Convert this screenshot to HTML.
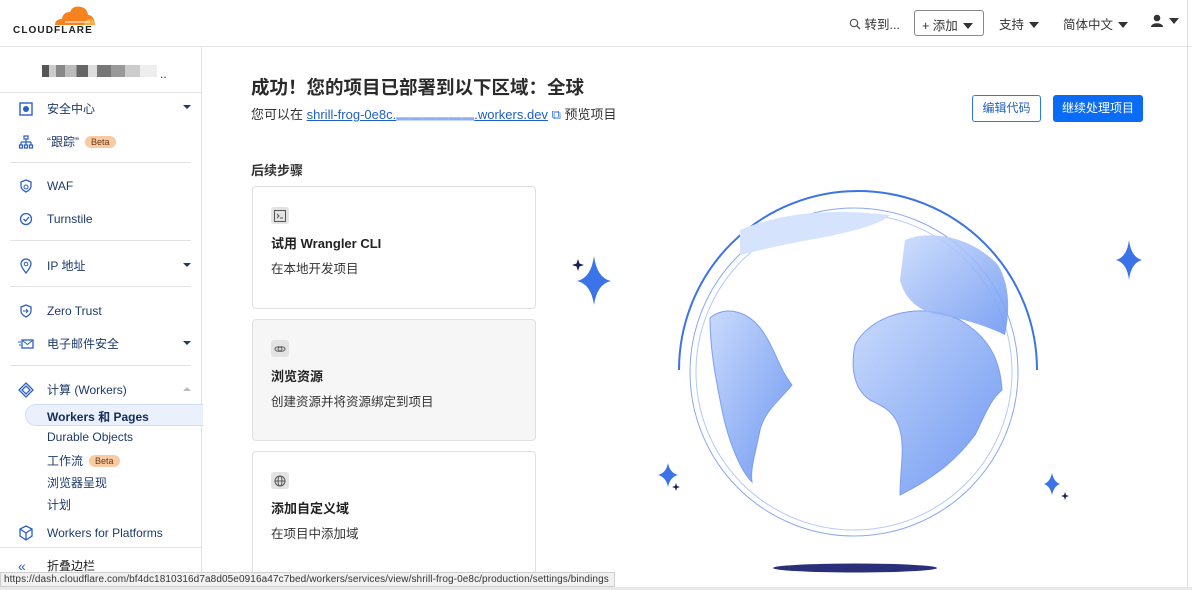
<!DOCTYPE html>
<html><head><meta charset="utf-8"><style>
*{box-sizing:border-box;margin:0;padding:0}
body{width:1192px;height:590px;overflow:hidden;background:#fff;font-family:"Liberation Sans","Noto Sans CJK SC",sans-serif;color:#313131;position:relative}
.hdr{position:absolute;left:0;top:0;width:1192px;height:47px;border-bottom:1px solid #e5e5e5}
.side{position:absolute;left:0;top:47px;width:202px;height:543px;border-right:1px solid #e2e2e2}
.it{position:absolute;left:18px;font-size:12px;color:#1e3a6a;display:flex;align-items:center}
.it svg{width:16px;height:16px;margin-right:13px}
.caret{position:absolute;left:183px;width:0;height:0;border-left:4px solid transparent;border-right:4px solid transparent;border-top:4px solid #1e3a6a}
.sep{position:absolute;left:10px;width:181px;height:1px;background:#e2e2e2}
.sub{position:absolute;left:47px;font-size:12px;color:#1e3a6a}
.beta{display:inline-block;background:#f8cba3;color:#6b3a12;font-size:9px;border-radius:8px;padding:1px 6px;margin-left:6px;vertical-align:1px}
.card{position:absolute;left:252px;width:284px;border:1px solid #e0e0e0;border-radius:4px;background:#fff}
.card .ic{position:absolute;left:18px;top:20px;width:18px;height:17px;background:#e3e3e3;border-radius:3px}
.card .ic svg{position:absolute;left:3px;top:2.5px}
.card b{position:absolute;left:18px;top:46px;font-size:13px;color:#222}
.card span{position:absolute;left:18px;top:71px;font-size:12.5px;color:#333}
.nav{position:absolute;top:14px;font-size:12.5px;color:#333}
.tri{display:inline-block;width:0;height:0;border-left:5px solid transparent;border-right:5px solid transparent;border-top:6px solid #333;margin-left:5px;vertical-align:1px}
</style></head><body>
<div class="hdr">
  <svg style="position:absolute;left:53px;top:5px" width="44" height="21" viewBox="0 0 44 21"><path d="M2 20 Q2 14 9 14 Q10 7 17 7 Q20 0 28 2 Q34 3 35 10 Q41 10 42 20 Z" fill="#f6821f"/><path d="M31 20 Q32 14 38 14 Q42 15 42 20Z" fill="#fbad41"/><path d="M12 17 L37 17" stroke="#fff" stroke-width="1"/></svg>
  <div style="position:absolute;left:13px;top:25px;font-size:10px;font-weight:bold;letter-spacing:1.1px;color:#222">CLOUDFLARE</div>
  <div class="nav" style="left:849px"><svg width="12" height="12" viewBox="0 0 12 12" style="vertical-align:-1px"><circle cx="5" cy="5" r="3.7" fill="none" stroke="#555" stroke-width="1.2"/><path d="M8 8 L11 11" stroke="#555" stroke-width="1.3"/></svg> 转到...</div>
  <div style="position:absolute;left:914px;top:10px;width:70px;height:26px;border:1px solid #888;border-radius:3px;font-size:12.5px;color:#333;padding:4px 0 0 7px">+ 添加<span class="tri"></span></div>
  <div class="nav" style="left:999px">支持<span class="tri"></span></div>
  <div class="nav" style="left:1063px">简体中文<span class="tri"></span></div>
  <div class="nav" style="left:1150px"><svg width="14" height="13" viewBox="0 0 14 13" style="vertical-align:-2px"><circle cx="7" cy="4" r="3.3" fill="#333"/><path d="M1 13 C1 8 13 8 13 13Z" fill="#333"/></svg><span class="tri"></span></div>
</div>
<div style="position:absolute;left:1187px;top:0;width:1px;height:590px;background:#ddd"></div>
<div class="side">
  <div style="position:absolute;left:42px;top:18px;width:115px;height:12px;background:linear-gradient(90deg,#555 0 6%,#ccc 6% 12%,#888 12% 20%,#bbb 20% 30%,#666 30% 40%,#ddd 40% 48%,#777 48% 60%,#999 60% 72%,#ccc 72% 85%,#eee 85%)"></div>
  <div style="position:absolute;left:160px;top:20px;font-size:12px">..</div>
  <div class="sep" style="left:0;width:202px;top:45px"></div>
  <div class="it" style="top:53px"><svg viewBox="0 0 16 16"><rect x="2" y="2" width="12" height="12" fill="none" stroke="#2c5fc4" stroke-width="1.4"/><circle cx="8" cy="8" r="3" fill="#2c5fc4"/></svg>安全中心</div><div class="caret" style="top:58px"></div>
  <div class="it" style="top:86px"><svg viewBox="0 0 16 16"><path d="M6 2h4v3H6zM8 5v3M3 8h10M3 8v3M8 8v3M13 8v3M1.5 11h3v3h-3zM6.5 11h3v3h-3zM11.5 11h3v3h-3z" fill="none" stroke="#2c5fc4" stroke-width="1.2"/></svg>“跟踪”<span class="beta">Beta</span></div>
  <div class="sep" style="top:115px"></div>
  <div class="it" style="top:131px"><svg viewBox="0 0 16 16"><path d="M8 2 L13 4 V8 C13 11 10 13 8 14 C6 13 3 11 3 8 V4 Z" fill="none" stroke="#2c5fc4" stroke-width="1.3"/><circle cx="8" cy="9" r="2" fill="none" stroke="#2c5fc4"/></svg>WAF</div>
  <div class="it" style="top:164px"><svg viewBox="0 0 16 16"><circle cx="8" cy="8" r="5.5" fill="none" stroke="#2c5fc4" stroke-width="1.3"/><path d="M5.5 8 L7.5 10 L11 6" fill="none" stroke="#2c5fc4" stroke-width="1.3"/></svg>Turnstile</div>
  <div class="sep" style="top:193px"></div>
  <div class="it" style="top:210px"><svg viewBox="0 0 16 16"><path d="M8 15 C4 10 3 8 3 6 A5 5 0 0 1 13 6 C13 8 12 10 8 15Z" fill="none" stroke="#2c5fc4" stroke-width="1.3"/><circle cx="8" cy="6" r="1.8" fill="none" stroke="#2c5fc4"/></svg>IP 地址</div><div class="caret" style="top:216px"></div>
  <div class="sep" style="top:239px"></div>
  <div class="it" style="top:256px"><svg viewBox="0 0 16 16"><path d="M8 2 L13 4 V8 C13 11 10 13 8 14 C6 13 3 11 3 8 V4 Z" fill="none" stroke="#2c5fc4" stroke-width="1.3"/><path d="M5 8h5M8 6l2 2-2 2" fill="none" stroke="#2c5fc4"/></svg>Zero Trust</div>
  <div class="it" style="top:288px"><svg viewBox="0 0 16 16"><rect x="4" y="4" width="11" height="8" fill="none" stroke="#2c5fc4" stroke-width="1.3"/><path d="M4 4l5.5 4.5L15 4M0 6h3M1 9h2" fill="none" stroke="#2c5fc4"/></svg>电子邮件安全</div><div class="caret" style="top:294px"></div>
  <div class="sep" style="top:318px"></div>
  <div class="it" style="top:334px"><svg viewBox="0 0 16 16"><path d="M8 1 L15 8 L8 15 L1 8Z M8 4 L12 8 L8 12 L4 8Z" fill="none" stroke="#2c5fc4" stroke-width="1.3"/></svg>计算 (Workers)</div><div class="caret" style="top:340px;border-top:none;border-bottom:4px solid #bbb"></div>
  <div style="position:absolute;left:25px;top:357px;width:178px;height:22px;background:#eaf1fd;border:1px solid #cfdcf3;border-right:none;border-radius:11px 0 0 11px"></div>
  <div class="sub" style="top:361px;font-weight:bold;color:#142c57">Workers 和 Pages</div>
  <div class="sub" style="top:383px">Durable Objects</div>
  <div class="sub" style="top:405px">工作流<span class="beta">Beta</span></div>
  <div class="sub" style="top:427px">浏览器呈现</div>
  <div class="sub" style="top:449px">计划</div>
  <div class="it" style="top:478px"><svg viewBox="0 0 16 16"><path d="M8 1 L14 4 V11 L8 15 L2 11 V4Z M2 4 L8 8 L14 4 M8 8 V15" fill="none" stroke="#2c5fc4" stroke-width="1.3"/></svg>Workers for Platforms</div>
  <div class="sep" style="left:0;width:202px;top:500px"></div>
  <div class="it" style="top:510px;color:#222"><span style="color:#2c5fc4;width:16px;margin-right:13px;font-size:14px">«</span>折叠边栏</div>
</div>
<div style="position:absolute;left:251px;top:74px;font-size:18.5px;font-weight:bold;color:#2a2a2a">成功！您的项目已部署到以下区域：全球</div>
<div style="position:absolute;left:251px;top:104px;font-size:13px;color:#333">您可以在 <span style="color:#1f5fc4;text-decoration:underline">shrill-frog-0e8c.<span style="color:#8fb0ee">▂▂▂▂▂▂</span>.workers.dev</span> <span style="color:#2c6fd8">⧉</span> 预览项目</div>
<div style="position:absolute;left:972px;top:95px;width:69px;height:27px;border:1px solid #2c7be5;border-radius:3px;color:#1f5fc4;font-size:12px;text-align:center;line-height:25px">编辑代码</div>
<div style="position:absolute;left:1053px;top:95px;width:90px;height:27px;background:#0a6cf5;border-radius:3px;color:#fff;font-size:12px;text-align:center;line-height:27px">继续处理项目</div>
<div style="position:absolute;left:251px;top:160px;font-size:13px;font-weight:bold;color:#333">后续步骤</div>
<div class="card" style="top:186px;height:123px"><div class="ic"><svg width="12" height="12" viewBox="0 0 12 12"><rect x="0.5" y="0.5" width="11" height="11" fill="none" stroke="#555"/><path d="M3 4l2 2-2 2M6 8h3" fill="none" stroke="#555"/></svg></div><b>试用 Wrangler CLI</b><span>在本地开发项目</span></div>
<div class="card" style="top:319px;height:122px;background:#f6f6f6"><div class="ic"><svg width="12" height="12" viewBox="0 0 12 12"><ellipse cx="4.5" cy="6" rx="3.5" ry="2.3" fill="none" stroke="#555"/><ellipse cx="7.5" cy="6" rx="3.5" ry="2.3" fill="none" stroke="#555"/></svg></div><b>浏览资源</b><span>创建资源并将资源绑定到项目</span></div>
<div class="card" style="top:451px;height:130px"><div class="ic"><svg width="12" height="12" viewBox="0 0 12 12"><circle cx="6" cy="6" r="5" fill="none" stroke="#555"/><ellipse cx="6" cy="6" rx="2" ry="5" fill="none" stroke="#555"/><path d="M1 6h10" stroke="#555"/></svg></div><b>添加自定义域</b><span>在项目中添加域</span></div>
<svg style="position:absolute;left:0;top:0" width="1192" height="590" viewBox="0 0 1192 590">
<defs><linearGradient id="g" x1="0" y1="0" x2="1" y2="1"><stop offset="0" stop-color="#c9dafc"/><stop offset="1" stop-color="#6f98f2"/></linearGradient></defs>
<path d="M679 370 A179 179 0 0 1 1037 370" fill="none" stroke="#3b73e8" stroke-width="2"/>
<circle cx="854" cy="372" r="164" fill="none" stroke="#8aa8ee" stroke-width="1"/>
<circle cx="854" cy="372" r="158" fill="none" stroke="#b5c9f5" stroke-width="1"/>
<path d="M710 318 C725 305 750 310 765 335 C775 350 780 370 792 385 C780 400 765 410 760 430 C755 455 750 470 752 482 C740 470 728 440 722 410 C716 380 710 350 710 318Z" fill="url(#g)" stroke="#7a9ef0"/>
<path d="M855 345 C870 315 920 300 960 320 C985 335 1000 355 1002 390 C990 400 985 415 975 435 C960 455 940 475 900 495 C900 470 905 450 900 430 C895 410 880 405 870 400 C855 390 850 370 855 345Z" fill="url(#g)" stroke="#7a9ef0"/>
<path d="M905 240 C935 228 975 240 998 265 C1010 285 1010 310 1005 335 C985 325 960 318 940 315 C920 312 905 300 900 280 Z" fill="url(#g)" opacity=".9"/>
<path d="M740 230 C780 213 830 208 890 215 C880 225 850 232 820 238 C790 243 760 250 740 255 Z" fill="#d6e3fc"/>
<ellipse cx="855" cy="568" rx="82" ry="4.5" fill="#2b2f7a"/>
<g fill="#3b73e8">
<path d="M594 256 Q597 278 611 281 Q597 284 594 305 Q591 284 577 281 Q591 278 594 256Z"/>
<path d="M1129 240 Q1131 257 1142 260 Q1131 263 1129 280 Q1127 263 1116 260 Q1127 257 1129 240Z"/>
<path d="M668 463 Q670 473 678 475 Q670 477 668 487 Q666 477 658 475 Q666 473 668 463Z"/>
<path d="M1052 473 Q1054 482 1060 484 Q1054 486 1052 495 Q1050 486 1044 484 Q1050 482 1052 473Z"/>
</g>
<g fill="#1a1f5c">
<path d="M578 259 L579.5 263.5 L584 265 L579.5 266.5 L578 271 L576.5 266.5 L572 265 L576.5 263.5Z"/>
<path d="M676 483 L677 486 L680 487 L677 488 L676 491 L675 488 L672 487 L675 486Z"/>
<path d="M1065 492 L1066 495 L1069 496 L1066 497 L1065 500 L1064 497 L1061 496 L1064 495Z"/>
</g>
</svg>
<div style="position:absolute;left:0;top:572px;width:615px;height:15px;background:#f1f1f1;border:1px solid #cfcfcf;font-size:10px;letter-spacing:0.1px;color:#333;padding-left:3px;line-height:13px;white-space:nowrap;overflow:hidden">https://dash.cloudflare.com/bf4dc1810316d7a8d05e0916a47c7bed/workers/services/view/shrill-frog-0e8c/production/settings/bindings</div>
<div style="position:absolute;left:0;top:587px;width:1192px;height:3px;background:#e8e8e8"></div>
</body></html>
